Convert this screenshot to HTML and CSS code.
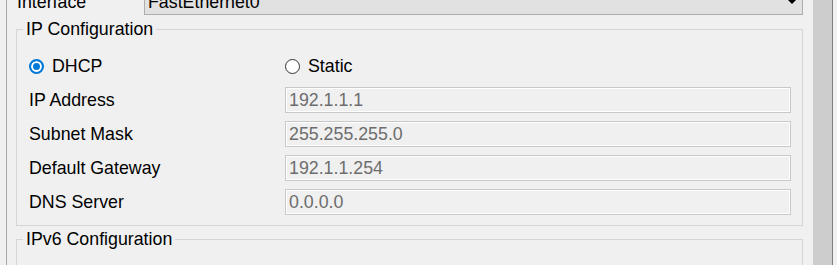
FILE: index.html
```html
<!DOCTYPE html>
<html>

<head>
    <meta charset="utf-8">
    <title>IP Configuration</title>
    <link rel="stylesheet" href="styles.css">
</head>

<body>
    <div class="window">
        <div class="panel">
            <div class="iface-row">
                <span class="iface-label">Interface</span>
                <div class="select">
                    <span>FastEthernet0</span>
                    <span class="arrow"></span>
                </div>
            </div>

            <fieldset class="group">
                <legend>IP Configuration</legend>
                <div class="fields">
                    <div class="row">
                        <label class="opt"><span class="radio on"></span>DHCP</label>
                        <label class="opt"><span class="radio"></span>Static</label>
                    </div>
                    <div class="row">
                        <span class="name">IP Address</span>
                        <div class="field">192.1.1.1</div>
                    </div>
                    <div class="row">
                        <span class="name">Subnet Mask</span>
                        <div class="field">255.255.255.0</div>
                    </div>
                    <div class="row">
                        <span class="name">Default Gateway</span>
                        <div class="field">192.1.1.254</div>
                    </div>
                    <div class="row">
                        <span class="name">DNS Server</span>
                        <div class="field">0.0.0.0</div>
                    </div>
                </div>
            </fieldset>

            <fieldset class="group v6">
                <legend>IPv6 Configuration</legend>
                <div class="fields tall"></div>
            </fieldset>
        </div>
        <div class="scrollbar"></div>
    </div>
</body>

</html>
```

FILE: styles.css
```css
* {
    box-sizing: border-box;
    margin: 0px;
    padding: 0px;
}

body {
    background-color: #f0f0f0;
    font-family: "Liberation Sans", Arial, sans-serif;
    font-size: 17.8px;
    color: #000;
    overflow: hidden;
}

.window {
    display: flex;
    height: 265px;
    overflow: hidden;
}

.panel {
    flex: 1;
    min-width: 0;
    margin-left: 6px;
    border-left: 1px solid #a8a8a8;
    padding: 0px 10px 0px 9px;
}

/* interface selector, cut off at the top */
.iface-row {
    display: flex;
    align-items: center;
    height: 26px;
    margin-top: -11px;
}

.iface-label {
    width: 128px;
    padding-left: 1px;
}

.select {
    flex: 1;
    height: 26px;
    display: flex;
    align-items: center;
    padding: 0px 6px 0px 3px;
    background-color: #e1e1e1;
    border: 1px solid #adadad;
}

.arrow {
    margin-left: auto;
    border-left: 4px solid transparent;
    border-right: 4px solid transparent;
    border-top: 4px solid #000;
}

/* group boxes */
.group {
    margin-top: 4px;
    padding: 14px 11px 10px 6px;
    border: 1px solid #d5d5d5;
}

.group legend {
    padding: 0px 3px;
    line-height: 20px;
}

.group.v6 {
    margin-top: 3px;
}

.fields {
    display: flex;
    flex-direction: column;
    gap: 8px;
    padding-left: 6px;
}

.fields.tall {
    height: 40px;
}

.row {
    display: flex;
    align-items: center;
    height: 26px;
}

.opt {
    width: 256px;
    display: flex;
    align-items: center;
    gap: 8px;
}

.radio {
    width: 15px;
    height: 15px;
    border-radius: 50%;
    border: 1px solid #333;
    background-color: #fff;
}

.radio.on {
    border: 2px solid #0078d7;
    background-color: #0078d7;
    box-shadow: inset 0px 0px 0px 2px #fff;
}

.name {
    width: 256px;
}

.field {
    flex: 1;
    height: 26px;
    display: flex;
    align-items: center;
    padding-left: 3px;
    color: #6d6d6d;
    border: 1px solid #c8c8c8;
    box-shadow: inset 0px 0px 0px 1px #fff;
}

.scrollbar {
    width: 20px;
    margin-right: 4px;
    background-color: #cdcdcd;
    border-right: 1px solid #7f7f7f;
}
```
